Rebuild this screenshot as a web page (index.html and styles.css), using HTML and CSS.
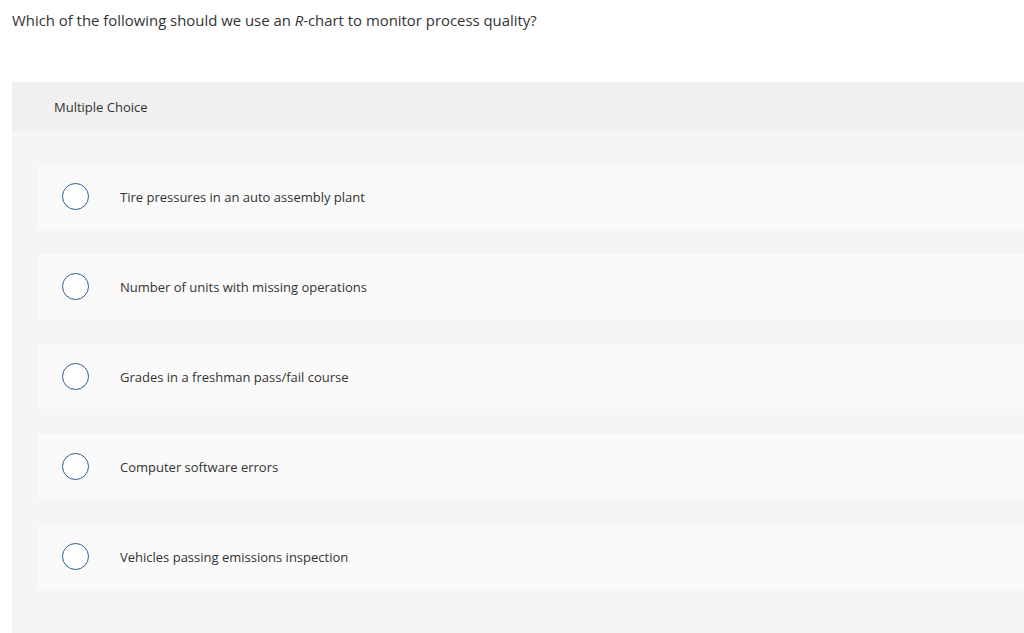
FILE: index.html
```html
<!DOCTYPE html>
<html>
<head>
<meta charset="utf-8">
<link rel="stylesheet" href="styles.css">
</head>
<body>
<div class="page">
  <p class="question">Which of the following should we use an <em>R</em>-chart to monitor process quality?</p>
  <section class="panel">
    <div class="panel-head">Multiple Choice</div>
    <div class="options">
      <div class="option"><span class="radio"></span><span class="label">Tire pressures in an auto assembly plant</span></div>
      <div class="option"><span class="radio"></span><span class="label">Number of units with missing operations</span></div>
      <div class="option"><span class="radio"></span><span class="label">Grades in a freshman pass/fail course</span></div>
      <div class="option"><span class="radio"></span><span class="label">Computer software errors</span></div>
      <div class="option"><span class="radio"></span><span class="label">Vehicles passing emissions inspection</span></div>
    </div>
  </section>
</div>
</body>
</html>
```
FILE: styles.css
```css
html, body {
  margin: 0;
  padding: 0;
  background: #ffffff;
  overflow: hidden;
}
body {
  font-family: "Open Sans", "Liberation Sans", Arial, sans-serif;
  color: #333333;
}
.page {
  padding-left: 12px;
}
.question {
  margin: 0;
  padding-top: 10px;
  font-size: 14.9px;
  line-height: 20px;
  height: 72px;
}
.panel {
  background: #f5f5f5;
  height: 560px;
}
.panel-head {
  background: #f0f0f0;
  height: 49px;
  display: flex;
  align-items: center;
  padding-left: 42px;
  font-size: 13px;
}
.options {
  padding-top: 33px;
  padding-left: 26px;
  display: flex;
  flex-direction: column;
  gap: 25px;
}
.option {
  background: #fafafa;
  height: 65px;
  display: flex;
  align-items: center;
  padding-left: 24px;
}
.radio {
  width: 25px;
  height: 25px;
  border: 1.5px solid #2f5b93;
  border-radius: 50%;
  background: #ffffff;
  flex: none;
}
.label {
  margin-left: 31px;
  font-size: 13px;
}
```
